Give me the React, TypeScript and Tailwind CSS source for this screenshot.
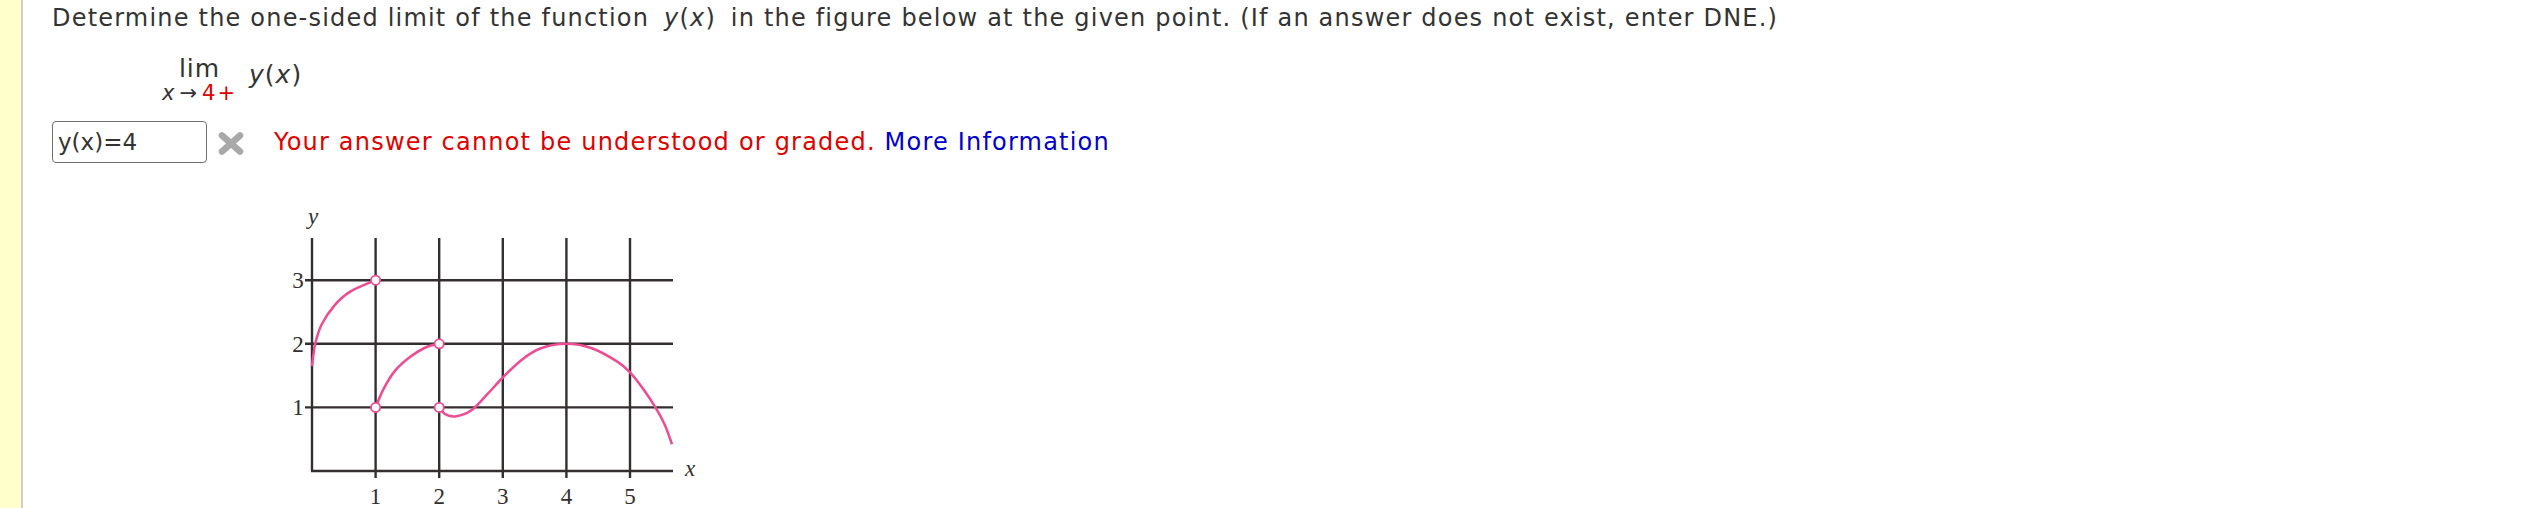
import React from 'react';

type Pt = [number, number];

// graph origin / unit inside the svg
const X0 = 43;
const Y0 = 270;
const U = 63.6;

const px = (x: number) => X0 + U * x;
const py = (y: number) => Y0 - U * y;

// catmull-rom through the points, as cubic beziers
function smoothPath(pts: Pt[]) {
  const p = pts.map(([x, y]) => [px(x), py(y)] as Pt);
  let d = `M ${p[0][0].toFixed(1)} ${p[0][1].toFixed(1)}`;
  for (let i = 0; i < p.length - 1; i++) {
    const p0 = p[i - 1] || p[i];
    const p1 = p[i];
    const p2 = p[i + 1];
    const p3 = p[i + 2] || p2;
    const c1x = p1[0] + (p2[0] - p0[0]) / 6;
    const c1y = p1[1] + (p2[1] - p0[1]) / 6;
    const c2x = p2[0] - (p3[0] - p1[0]) / 6;
    const c2y = p2[1] - (p3[1] - p1[1]) / 6;
    d += ` C ${c1x.toFixed(1)} ${c1y.toFixed(1)} ${c2x.toFixed(1)} ${c2y.toFixed(1)} ${p2[0].toFixed(1)} ${p2[1].toFixed(1)}`;
  }
  return d;
}

const seg1: Pt[] = [[0, 1.65], [0.05, 2.0], [0.15, 2.3], [0.35, 2.6], [0.6, 2.82], [1, 3]];
const seg2: Pt[] = [[1, 1], [1.12, 1.28], [1.3, 1.57], [1.55, 1.8], [1.8, 1.95], [2, 2]];
const seg3: Pt[] = [
  [2, 1], [2.1, 0.89], [2.27, 0.86], [2.5, 0.95], [2.75, 1.2], [3, 1.47], [3.3, 1.75],
  [3.6, 1.93], [4, 2], [4.4, 1.93], [4.8, 1.72], [5, 1.55], [5.2, 1.3], [5.4, 1.0],
  [5.55, 0.72], [5.66, 0.42],
];

const holes: Pt[] = [[1, 3], [1, 1], [2, 2], [2, 1]];

function Graph() {
  const grid = '#332f2f';
  const pink = '#ef4b93';
  return (
    <svg width="430" height="308" viewBox="0 0 430 308" className="block">
      {/* horizontal lines */}
      {[1, 2, 3].map((k) => (
        <line key={'h' + k} x1={X0 - 7} x2={404} y1={py(k)} y2={py(k)} stroke={grid} strokeWidth="2.4" />
      ))}
      <line x1={X0 - 1} x2={404} y1={Y0} y2={Y0} stroke={grid} strokeWidth="2.4" />
      {/* vertical lines */}
      <line x1={X0} x2={X0} y1={37} y2={Y0} stroke={grid} strokeWidth="2.4" />
      {[1, 2, 3, 4, 5].map((k) => (
        <line key={'v' + k} x1={px(k)} x2={px(k)} y1={37} y2={Y0 + 7} stroke={grid} strokeWidth="2.4" />
      ))}
      {/* curves */}
      <g fill="none" stroke={pink} strokeWidth="2.5">
        <path d={smoothPath(seg1)} />
        <path d={smoothPath(seg2)} />
        <path d={smoothPath(seg3)} />
      </g>
      {holes.map(([x, y]) => (
        <circle key={`${x}-${y}`} cx={px(x)} cy={py(y)} r="4.6" fill="#fff" stroke={pink} strokeWidth="1.8" />
      ))}
      {/* labels */}
      <g fontFamily="'Liberation Serif', serif" fontSize="23" fill="#332f2f">
        <text x={X0 + 1} y={23} fontStyle="italic" textAnchor="middle">y</text>
        <text x={416} y={Y0 + 5} fontStyle="italic">x</text>
        {[1, 2, 3].map((k) => (
          <text key={'yl' + k} x={X0 - 14} y={py(k) + 8} textAnchor="middle">{k}</text>
        ))}
        {[1, 2, 3, 4, 5].map((k) => (
          <text key={'xl' + k} x={px(k)} y={303} textAnchor="middle">{k}</text>
        ))}
      </g>
    </svg>
  );
}

function CrossIcon() {
  return (
    <svg width="28" height="25" viewBox="0 0 28 25" className="block">
      <g stroke="#a9a9a9" strokeWidth="6.5" strokeLinecap="round">
        <line x1="5" y1="4.5" x2="23" y2="20.5" />
        <line x1="23" y1="4.5" x2="5" y2="20.5" />
      </g>
    </svg>
  );
}

export default function App() {
  return (
    <div className="flex min-h-[508px] w-full bg-white" style={{ fontFamily: "'DejaVu Sans', Verdana, sans-serif" }}>
      <div className="w-[21px] shrink-0 bg-[#ffffcc] border-r-2 border-[#cfcfc4] box-content" />
      <div className="flex-1 pl-[29px] text-[#333333]">
        <p className="text-[24px] tracking-[1.2px] leading-[30px] mt-[3px] whitespace-nowrap">
          Determine the one-sided limit of the function{' '}
          <span className="italic mx-[6px]">y</span>
          <span className="-ml-[6px]">(</span>
          <span className="italic">x</span>
          <span className="mr-[6px]">)</span> in the figure below at the given point. (If an answer does not exist, enter DNE.)
        </p>

        <div className="flex items-start pl-[110px] mt-[22px] h-[52px]">
          <div className="flex flex-col items-center">
            <span className="text-[25px] tracking-[1px] leading-[28px]">lim</span>
            <span className="text-[21px] leading-[20px] whitespace-nowrap">
              <span className="italic">x</span>
              <span className="mx-[5px]">→</span>
              <span className="text-[#e00000] tracking-[2px]">4+</span>
            </span>
          </div>
          <span className="text-[25px] tracking-[1px] leading-[28px] ml-[12px] mt-[6px]">
            <span className="italic">y</span>(<span className="italic">x</span>)
          </span>
        </div>

        <div className="flex items-center mt-[14px]">
          <div className="w-[155px] h-[42px] border-[1.5px] border-[#707070] rounded-[4px] flex items-center pl-[5px] text-[23px] text-[#333333]">
            y(x)=4
          </div>
          <div className="ml-[10px] mt-[2px]">
            <CrossIcon />
          </div>
          <p className="ml-[29px] text-[24px] tracking-[1.2px] whitespace-nowrap">
            <span className="text-[#e00000]">Your answer cannot be understood or graded.</span>{' '}
            <span className="text-[#0000cc]">More Information</span>
          </p>
        </div>

        <div className="pl-[217px] mt-[38px]">
          <Graph />
        </div>
      </div>
    </div>
  );
}
